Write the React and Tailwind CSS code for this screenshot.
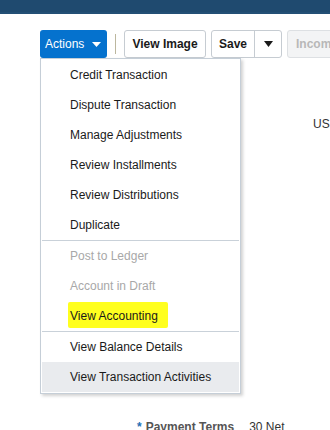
import React from "react";

function Item({ children, disabled, active, mark }) {
  return (
    <div
      className={`h-[30px] flex items-center pl-[28px] whitespace-nowrap ${
        disabled ? "text-[#a8a8a8]" : "text-[#1a1a1a]"
      } ${active ? "bg-[#e9ebee]" : ""}`}
    >
      {mark ? (
        <span className="relative inline-block">
          <span className="absolute left-[-2px] right-[-10px] top-[-6px] bottom-[-4px] bg-[#ffff1f] rounded-[2px]"></span>
          <span className="relative">{children}</span>
        </span>
      ) : (
        children
      )}
    </div>
  );
}

function Sep() {
  return <div className="h-px bg-[#c9d1d9]"></div>;
}

export default function App() {
  return (
    <div className="relative w-[330px] h-[430px] overflow-hidden bg-white font-['Liberation_Sans',Arial,sans-serif] text-[12px] leading-[16px]">
      <div className="h-[14px] bg-[#1f4a6f] border-b-[2px] border-[#234f75]"></div>

      <div className="mt-[16px] h-[28px] flex items-stretch pl-[40px] whitespace-nowrap">
        <div className="shrink-0 w-[67px] bg-[#0572ce] rounded-[3px] text-white flex items-center pl-[5px] gap-[8px]">
          <span>Actions</span>
          <svg width="9" height="5" viewBox="0 0 9 5">
            <path d="M0 0 L9 0 L4.5 5 Z" fill="white" />
          </svg>
        </div>
        <div className="shrink-0 w-px bg-[#bcb79e] my-[4px] ml-[8px] mr-[8px]"></div>
        <div className="shrink-0 w-[82px] border border-[#c6ccd2] rounded-[3px] flex items-center justify-center font-bold text-[#1a1a1a]">
          View Image
        </div>
        <div className="shrink-0 ml-[5px] w-[71px] border border-[#c6ccd2] rounded-[3px] flex font-bold text-[#1a1a1a]">
          <div className="w-[43px] flex items-center justify-center border-r border-[#c6ccd2]">Save</div>
          <div className="flex-1 flex items-center justify-center">
            <svg width="9" height="6" viewBox="0 0 9 6">
              <path d="M0 0 L9 0 L4.5 6 Z" fill="#1a1a1a" />
            </svg>
          </div>
        </div>
        <div className="shrink-0 ml-[5px] w-[70px] border border-[#dde0e3] bg-[#f3f4f5] rounded-[3px] flex items-center pl-[8px] font-bold text-[#b8b8b8]">
          Incomplete
        </div>
      </div>

      <div className="mt-[58px] pl-[313px] whitespace-nowrap text-[#333]">USD</div>

      <div className="mt-[287px] flex whitespace-nowrap text-[#555]">
        <span className="shrink-0 ml-[137px] text-[#1f6fb5] font-bold">*</span>
        <span className="shrink-0 ml-[4px] font-bold">Payment Terms</span>
        <span className="shrink-0 ml-[15px] text-[#333]">30 Net</span>
      </div>

      <div className="absolute left-[40px] top-[58px] w-[201px] bg-white border border-[#c5ced7] px-px py-px shadow-[2px_2px_3px_rgba(0,0,0,0.18)]">
        <Item>Credit Transaction</Item>
        <Item>Dispute Transaction</Item>
        <Item>Manage Adjustments</Item>
        <Item>Review Installments</Item>
        <Item>Review Distributions</Item>
        <Item>Duplicate</Item>
        <Sep />
        <Item disabled>Post to Ledger</Item>
        <Item disabled>Account in Draft</Item>
        <Item mark>View Accounting</Item>
        <Sep />
        <Item>View Balance Details</Item>
        <Item active>View Transaction Activities</Item>
      </div>
    </div>
  );
}
